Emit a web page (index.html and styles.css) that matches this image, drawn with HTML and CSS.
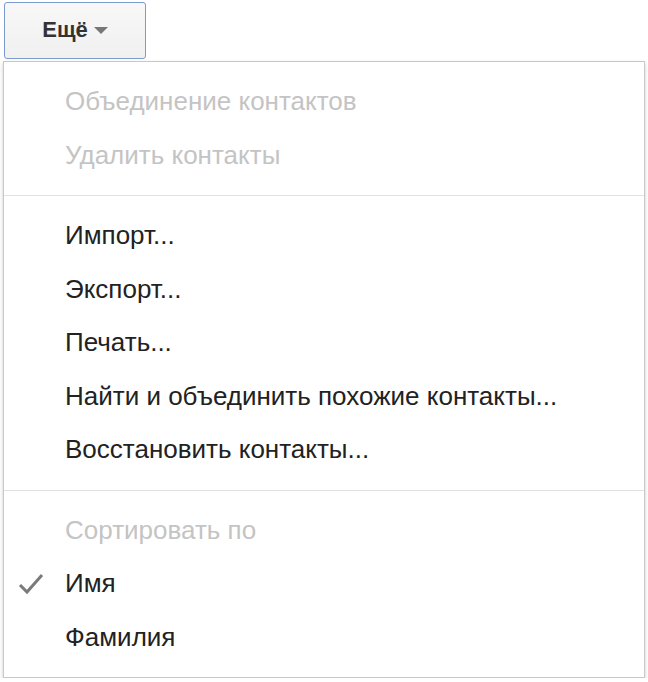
FILE: index.html
```html
<!DOCTYPE html>
<html lang="ru">
<head>
  <meta charset="UTF-8" />
  <title>Ещё</title>
  <link rel="stylesheet" href="styles.css">
</head>
<body>
  <div class="toolbar">
    <button class="more-btn">Ещё <span class="caret"></span></button>
  </div>

  <div class="menu">
    <div class="item disabled">Объединение контактов</div>
    <div class="item disabled">Удалить контакты</div>
    <div class="sep"></div>
    <div class="item">Импорт...</div>
    <div class="item">Экспорт...</div>
    <div class="item">Печать...</div>
    <div class="item">Найти и объединить похожие контакты...</div>
    <div class="item">Восстановить контакты...</div>
    <div class="sep"></div>
    <div class="item disabled">Сортировать по</div>
    <div class="item checked">
      <svg class="check" width="26" height="24" viewBox="0 0 26 24">
        <path d="M2 13 L9 20 L24 3" fill="none" stroke="#7a7a7a" stroke-width="3"/>
      </svg>
      Имя
    </div>
    <div class="item">Фамилия</div>
  </div>
</body>
</html>
```

FILE: styles.css
```css
body {
  margin: 0;
  padding: 0;
  background: #fff;
  font-family: "Liberation Sans", Arial, sans-serif;
}

.toolbar {
  padding: 2px 0 0 4px;
  height: 59px;
  box-sizing: border-box;
}

.more-btn {
  width: 142px;
  height: 57px;
  border: 1px solid #7b9bd0;
  border-radius: 3px;
  background: linear-gradient(#f8f8f8, #f0f0f0);
  font-family: "Liberation Sans", Arial, sans-serif;
  font-weight: bold;
  font-size: 22px;
  color: #333;
  display: flex;
  align-items: center;
  justify-content: center;
  gap: 6px;
  padding: 0 0 2px 0;
}

.caret {
  width: 0;
  height: 0;
  border-left: 7px solid transparent;
  border-right: 7px solid transparent;
  border-top: 7px solid #777;
  margin-top: 2px;
}

.menu {
  margin: 2px 0 0 3px;
  width: 642px;
  box-sizing: border-box;
  border: 1px solid #c8c8c8;
  box-shadow: 0 2px 4px rgba(0, 0, 0, 0.2);
  padding: 13px 0;
  background: #fff;
}

.item {
  position: relative;
  line-height: 53.5px;
  height: 53.5px;
  padding-left: 61px;
  font-size: 26px;
  color: #222;
}

.item.disabled {
  color: #c4c4c4;
}

.check {
  position: absolute;
  left: 14px;
  top: 15px;
}

.sep {
  border-top: 1px solid #e2e2e2;
  margin: 13px 0;
}
```
